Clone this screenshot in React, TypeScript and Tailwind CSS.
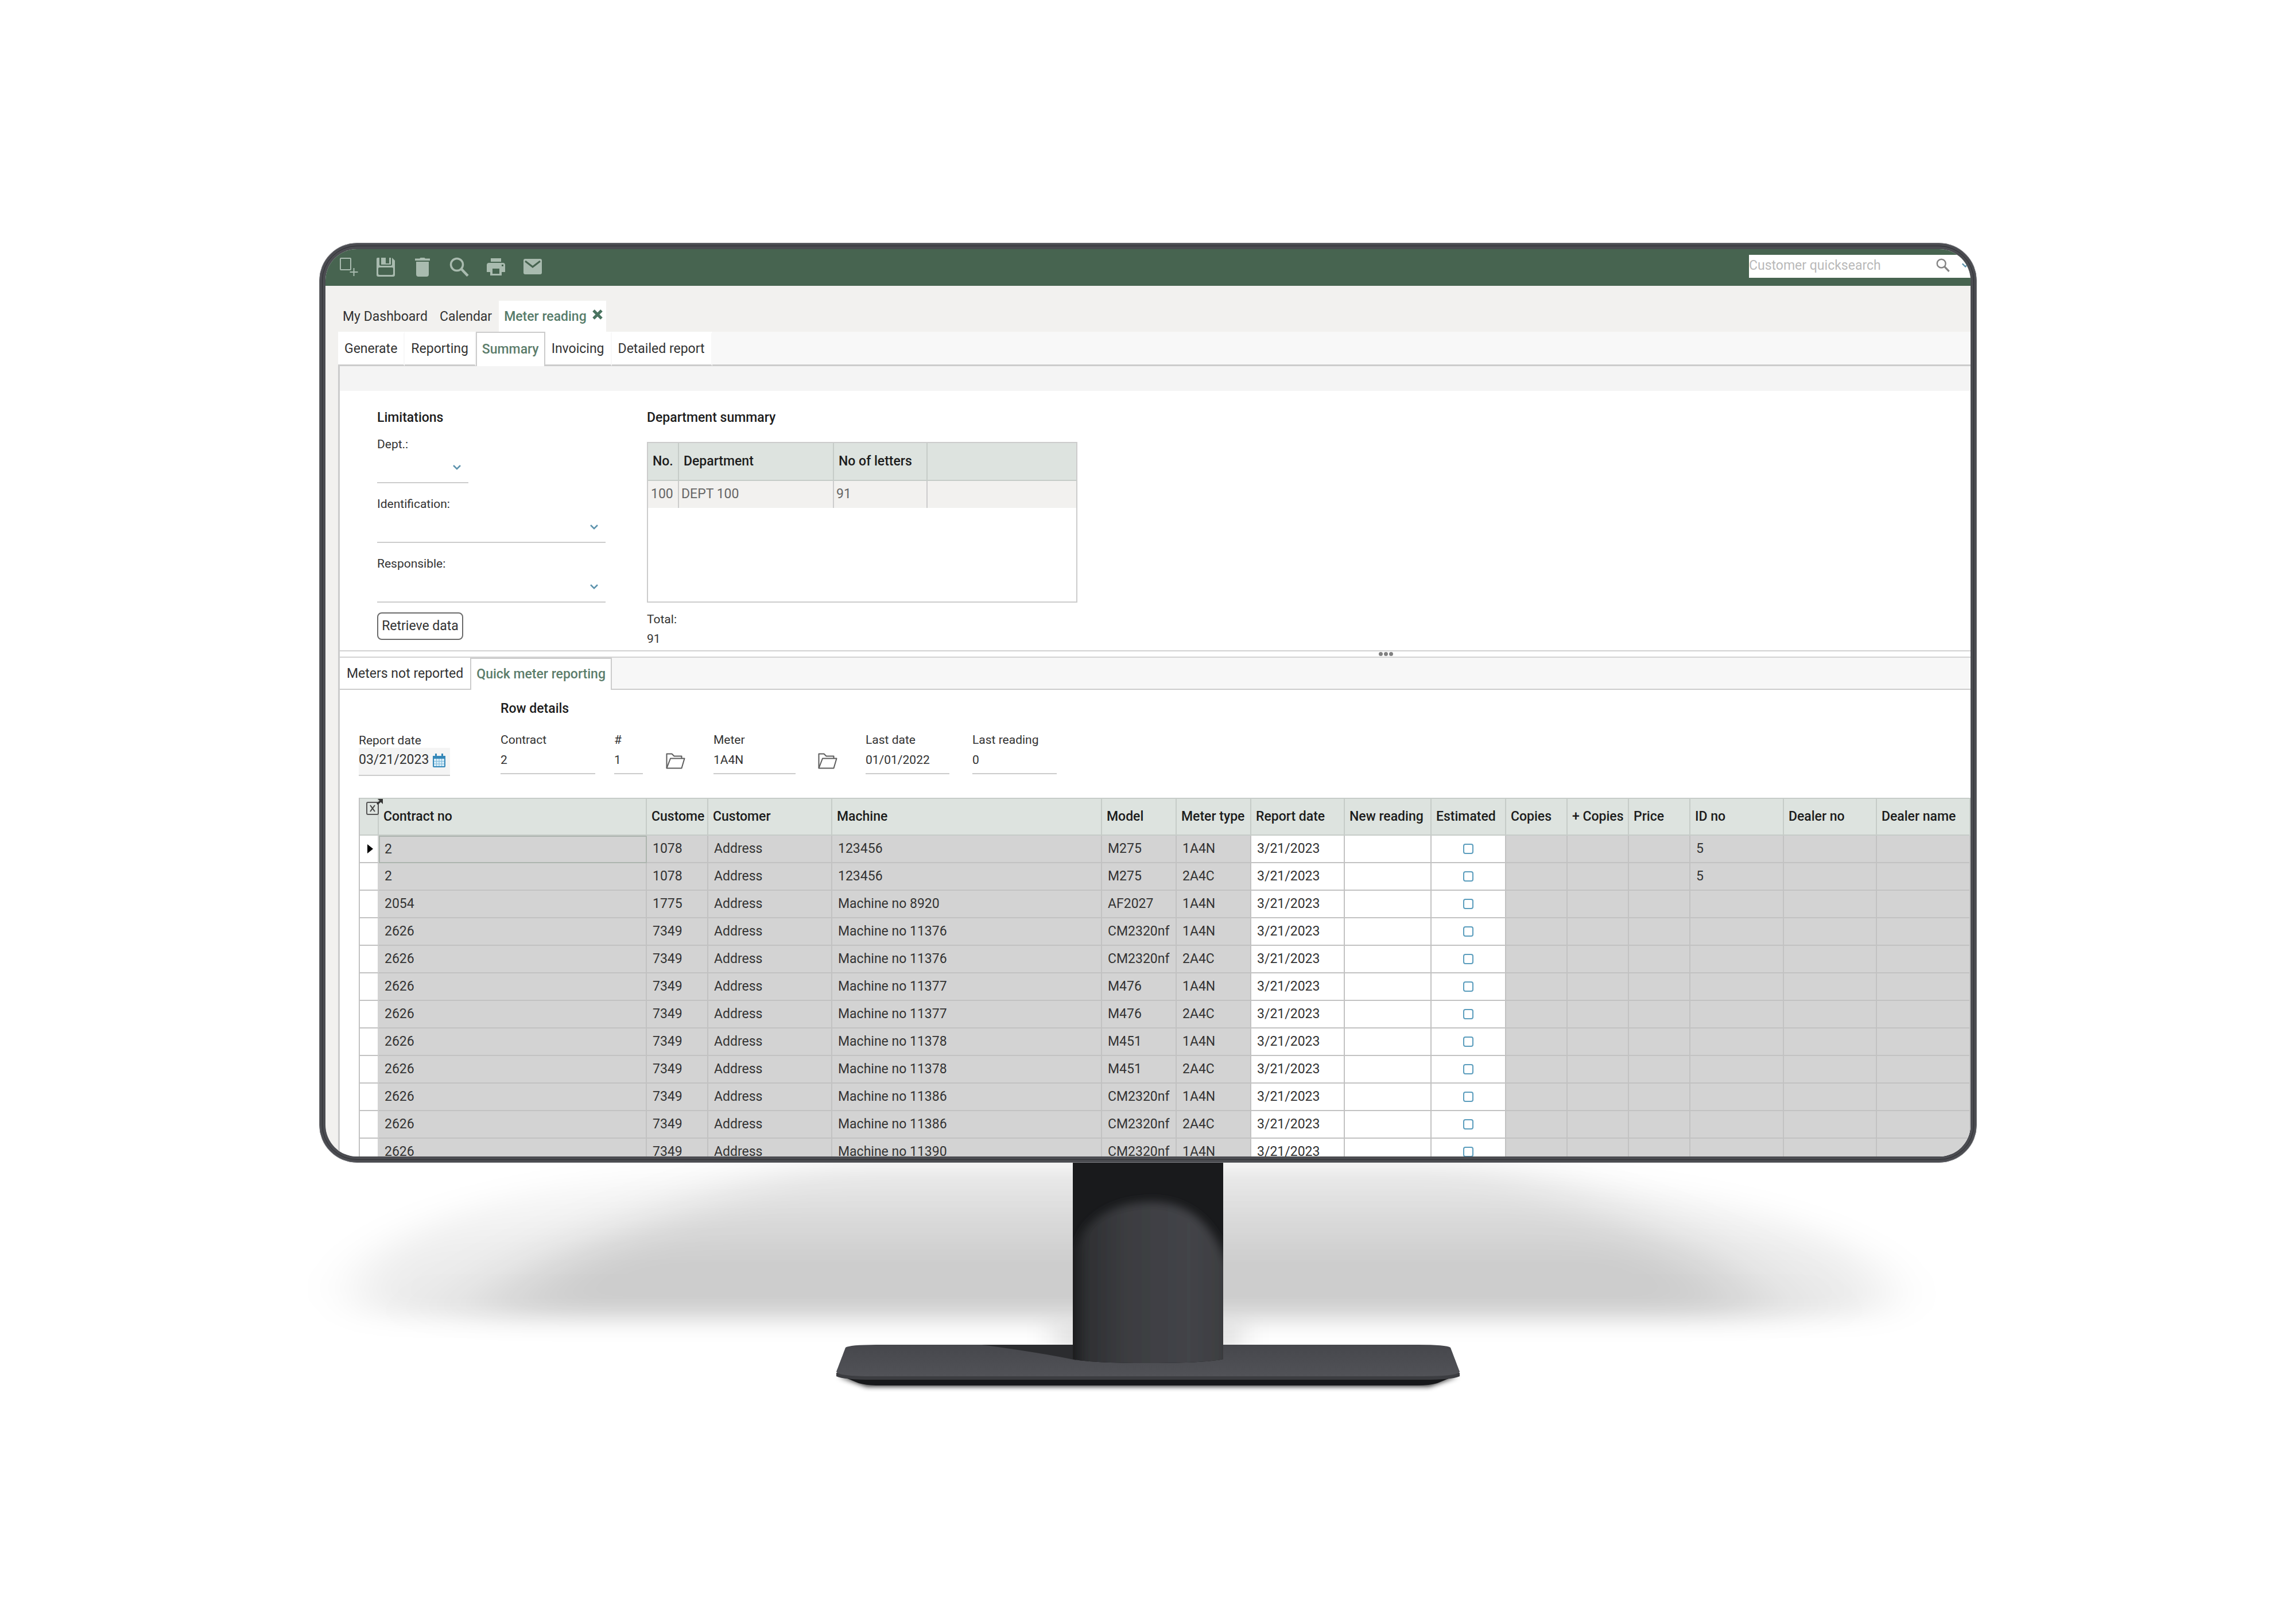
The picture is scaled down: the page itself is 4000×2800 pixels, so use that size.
import type { ReactNode } from 'react';

interface MeterRow {
  contract: string;
  customerNo: string;
  machine: string;
  model: string;
  meterType: string;
  idNo?: string;
}

const REPORT_DATE = '3/21/2023';

const ROWS: MeterRow[] = [
  { contract: '2', customerNo: '1078', machine: '123456', model: 'M275', meterType: '1A4N', idNo: '5' },
  { contract: '2', customerNo: '1078', machine: '123456', model: 'M275', meterType: '2A4C', idNo: '5' },
  { contract: '2054', customerNo: '1775', machine: 'Machine no 8920', model: 'AF2027', meterType: '1A4N' },
  { contract: '2626', customerNo: '7349', machine: 'Machine no 11376', model: 'CM2320nf', meterType: '1A4N' },
  { contract: '2626', customerNo: '7349', machine: 'Machine no 11376', model: 'CM2320nf', meterType: '2A4C' },
  { contract: '2626', customerNo: '7349', machine: 'Machine no 11377', model: 'M476', meterType: '1A4N' },
  { contract: '2626', customerNo: '7349', machine: 'Machine no 11377', model: 'M476', meterType: '2A4C' },
  { contract: '2626', customerNo: '7349', machine: 'Machine no 11378', model: 'M451', meterType: '1A4N' },
  { contract: '2626', customerNo: '7349', machine: 'Machine no 11378', model: 'M451', meterType: '2A4C' },
  { contract: '2626', customerNo: '7349', machine: 'Machine no 11386', model: 'CM2320nf', meterType: '1A4N' },
  { contract: '2626', customerNo: '7349', machine: 'Machine no 11386', model: 'CM2320nf', meterType: '2A4C' },
  { contract: '2626', customerNo: '7349', machine: 'Machine no 11390', model: 'CM2320nf', meterType: '1A4N' },
];

const COLUMNS = [
  { label: 'Contract no', width: 'w-[467px]' },
  { label: 'Custome', width: 'w-[107px]' },
  { label: 'Customer', width: 'w-[216px]' },
  { label: 'Machine', width: 'w-[470px]' },
  { label: 'Model', width: 'w-[130px]' },
  { label: 'Meter type', width: 'w-[130px]' },
  { label: 'Report date', width: 'w-[163px]' },
  { label: 'New reading', width: 'w-[151px]' },
  { label: 'Estimated', width: 'w-[130px]' },
  { label: 'Copies', width: 'w-[107px]' },
  { label: '+ Copies', width: 'w-[107px]' },
  { label: 'Price', width: 'w-[107px]' },
  { label: 'ID no', width: 'w-[163px]' },
  { label: 'Dealer no', width: 'w-[162px]' },
  { label: 'Dealer name', width: '' },
];

/* Icons */

function NewIcon() {
  return (
    <svg className="size-[34px]" viewBox="0 0 34 34" fill="none" stroke="currentColor" strokeWidth="2">
      <rect x="2" y="2" width="18" height="20" rx="1" />
      <path d="M25.500 19v14M18.500 26h14" />
    </svg>
  );
}

function SaveIcon() {
  return (
    <svg className="size-[34px]" viewBox="0 0 34 34" fill="currentColor">
      <path
        fillRule="evenodd"
        d="M3 1h3v12a2 2 0 0 0 2 2h18a2 2 0 0 0 2-2V1l5 5v25a3 3 0 0 1-3 3H4a3 3 0 0 1-3-3V3a2 2 0 0 1 2-2zM6 18a2 2 0 0 0-2 2v9a2 2 0 0 0 2 2h22a2 2 0 0 0 2-2v-9a2 2 0 0 0-2-2z"
      />
      <path d="M9 1h8v10H9zM23 1h3v12H9v-2h14z" />
    </svg>
  );
}

function TrashIcon() {
  return (
    <svg className="size-[34px]" viewBox="0 0 34 34" fill="currentColor">
      <path d="M4 2.500h8l1.500-1.500h7L22 2.500h8V6H4zM6 8h22v22a4 4 0 0 1-4 4H10a4 4 0 0 1-4-4z" />
    </svg>
  );
}

function SearchIcon({ className }: { className: string }) {
  return (
    <svg className={className} viewBox="0 0 34 34" fill="none" stroke="currentColor" strokeWidth="3.500">
      <circle cx="13" cy="13" r="10.500" />
      <path d="M20.500 20.500l11.500 12" strokeWidth="4.500" />
    </svg>
  );
}

function PrintIcon() {
  return (
    <svg className="size-[34px]" viewBox="0 0 34 34" fill="currentColor">
      <path d="M8 2h18v6H8z" />
      <path
        fillRule="evenodd"
        d="M5 10h24a4 4 0 0 1 4 4v12h-6v6H7v-6H1V14a4 4 0 0 1 4-4zM11 20v9h12v-9zM27 13h3v3h-3z"
      />
    </svg>
  );
}

function MailIcon() {
  return (
    <svg className="size-[34px]" viewBox="0 0 34 34">
      <rect x="1" y="3" width="32" height="27" rx="3" fill="currentColor" />
      <path d="M4 7l13 10L30 7" fill="none" stroke="#476450" strokeWidth="3" />
    </svg>
  );
}

function ChevronIcon({ className }: { className: string }) {
  return (
    <svg className={className} viewBox="0 0 16 10" fill="none" stroke="#5d93ad" strokeWidth="2.500">
      <path d="M2 2l6 6 6-6" />
    </svg>
  );
}

function CloseIcon() {
  return (
    <svg className="size-[18px]" viewBox="0 0 18 18" fill="none" stroke="#4a7460" strokeWidth="5">
      <path d="M2 2l14 14M16 2L2 16" />
    </svg>
  );
}

function CalendarIcon() {
  return (
    <svg className="h-[24px] w-[22px]" viewBox="0 0 22 24">
      <path d="M0 4h22v18a2 2 0 0 1-2 2H2a2 2 0 0 1-2-2z" fill="#3487b8" />
      <path d="M4 0h3v6H4zM15 0h3v6h-3z" fill="#3487b8" />
      <path d="M2 9h18v13H2z" fill="#d5ebf7" />
      <path d="M2 13.500h18M2 18h18M6.500 9v13M11 9v13M15.500 9v13" stroke="#7fb9da" strokeWidth="1" />
    </svg>
  );
}

function FolderIcon() {
  return (
    <svg className="h-[28px] w-[34px]" viewBox="0 0 34 28" fill="none" stroke="#5c5c5c" strokeWidth="2" strokeLinejoin="round">
      <path d="M1.500 26.500V1.500h9l4 4h13v4" />
      <path d="M1.500 26.500L8 9.500h24.500l-5 17z" />
    </svg>
  );
}

function ExportIcon() {
  return (
    <svg className="absolute top-0 left-[11px] h-[30px] w-[30px]" viewBox="0 0 30 30" fill="none">
      <rect x="1" y="6" width="20" height="21" rx="2" stroke="#555" strokeWidth="2" />
      <path d="M7 11l8 11M15 11L7 22" stroke="#444" strokeWidth="2" />
      <path d="M19 9l7-6" stroke="#333" strokeWidth="3" />
      <path d="M20 0h9v9z" fill="#333" />
    </svg>
  );
}

const TOOLS = [
  { label: 'New', icon: <NewIcon /> },
  { label: 'Save', icon: <SaveIcon /> },
  { label: 'Delete', icon: <TrashIcon /> },
  { label: 'Search', icon: <SearchIcon className="size-[34px]" /> },
  { label: 'Print', icon: <PrintIcon /> },
  { label: 'Mail', icon: <MailIcon /> },
];

function Toolbar() {
  return (
    <header className="flex h-[64px] items-start justify-between bg-[#476450] pt-[10px] pl-[24px]">
      <div className="flex gap-[30px] pt-[4px] text-[#a9bbaf]">
        {TOOLS.map((tool) => (
          <button key={tool.label} type="button" aria-label={tool.label}>
            {tool.icon}
          </button>
        ))}
      </div>
      <div className="flex h-[40px] w-[386px] items-center bg-white pb-[4px]">
        <input
          type="text"
          aria-label="Customer quicksearch"
          placeholder="Customer quicksearch"
          className="h-full min-w-0 flex-1 outline-none placeholder:text-[#b9b9b9]"
        />
        <SearchIcon className="mr-[20px] size-[24px] text-[#858585]" />
        <ChevronIcon className="mr-[2px] h-[10px] w-[14px]" />
      </div>
    </header>
  );
}

function MainTabs() {
  return (
    <nav className="flex h-[80px] items-end gap-[3px] pl-[21px]">
      <button type="button" className="h-[54px] px-[9px] pt-[2px]">My Dashboard</button>
      <button type="button" className="h-[54px] px-[9px] pt-[2px]">Calendar</button>
      <div className="flex h-[54px] items-center gap-[10px] bg-white pt-[2px] pr-[6px] pl-[9px]">
        <button type="button" className="font-medium text-[#577c6a]">Meter reading</button>
        <button type="button" aria-label="Close tab" className="pb-[8px]">
          <CloseIcon />
        </button>
      </div>
    </nav>
  );
}

function SubTab({ children, active }: { children: ReactNode; active?: boolean }) {
  return (
    <button
      type="button"
      className={
        active
          ? 'border-x-2 border-t-2 border-[#cccccc] bg-white px-[9px] font-medium text-[#5c7d6b]'
          : 'border-t-3 border-r-2 border-b-3 border-t-white border-r-[#f8f8f8] border-b-[#cccccc] bg-white px-[11px]'
      }
    >
      {children}
    </button>
  );
}

function SelectField({ id, label, width }: { id: string; label: string; width: string }) {
  return (
    <div className={width}>
      <label htmlFor={id} className="block text-[21px] leading-[28px]">
        {label}
      </label>
      <div className="relative flex items-center border-b-2 border-[#cccccc]">
        <select id={id} className="h-[52px] w-full appearance-none outline-none" />
        <ChevronIcon className="pointer-events-none absolute right-[12px] h-[10px] w-[16px]" />
      </div>
    </div>
  );
}

function DepartmentTable() {
  return (
    <div className="mt-[28px] h-[280px] w-[750px] border-2 border-[#cccccc]">
      <table className="w-full table-fixed border-separate border-spacing-0 text-left">
        <thead>
          <tr className="h-[66px] bg-[#dde3df] text-[#1c1c1c]">
            <th className="w-[54px] border-r-2 border-b-2 border-[#c6ccc8] pl-[8px] font-medium">No.</th>
            <th className="w-[270px] border-r-2 border-b-2 border-[#c6ccc8] pl-[8px] font-medium">Department</th>
            <th className="w-[163px] border-r-2 border-b-2 border-[#c6ccc8] pl-[8px] font-medium">No of letters</th>
            <th className="border-b-2 border-[#c6ccc8]" />
          </tr>
        </thead>
        <tbody>
          <tr className="h-[47px] bg-[#f2f1ef] text-[#666666]">
            <td className="border-r-2 border-[#cccccc] pl-[5px]">100</td>
            <td className="border-r-2 border-[#cccccc] pl-[4px]">DEPT 100</td>
            <td className="border-r-2 border-[#cccccc] pl-[4px]">91</td>
            <td />
          </tr>
        </tbody>
      </table>
    </div>
  );
}

function SummaryPanel() {
  return (
    <section>
      <div className="h-[43px] bg-[#f4f4f4]" />
      <div className="flex pt-[33px] pb-[6px] pl-[65px]">
        <div className="w-[470px]">
          <h2 className="mb-[18px] leading-[28px] font-medium text-[#1c1c1c]">Limitations</h2>
          <div className="flex flex-col gap-[22px]">
            <SelectField id="dept" label="Dept.:" width="w-[159px]" />
            <SelectField id="identification" label="Identification:" width="w-[398px]" />
            <SelectField id="responsible" label="Responsible:" width="w-[398px]" />
          </div>
          <button type="button" className="mt-[17px] h-[48px] w-[150px] rounded-[8px] border-2 border-[#6b6b6b]">
            Retrieve data
          </button>
        </div>
        <div>
          <h2 className="leading-[28px] font-medium text-[#1c1c1c]">Department summary</h2>
          <DepartmentTable />
          <div className="mt-[15px] flex flex-col gap-[6px] text-[21px] leading-[28px]">
            <span>Total:</span>
            <span>91</span>
          </div>
        </div>
      </div>
    </section>
  );
}

function Splitter() {
  return (
    <div className="flex h-[13px] items-center border-y-2 border-[#d2d2d2] pl-[63.7%]">
      <div className="flex gap-[2px]">
        <span className="size-[7px] rounded-full bg-[#808080]" />
        <span className="size-[7px] rounded-full bg-[#808080]" />
        <span className="size-[7px] rounded-full bg-[#808080]" />
      </div>
    </div>
  );
}

function TextField({ id, label, value, width }: { id: string; label: string; value: string; width: string }) {
  return (
    <div className={width}>
      <label htmlFor={id} className="block leading-[28px] whitespace-nowrap">
        {label}
      </label>
      <input
        id={id}
        type="text"
        defaultValue={value}
        className="h-[46px] w-full border-b-2 border-[#cccccc] pb-[2px] outline-none"
      />
    </div>
  );
}

function RowDetails() {
  return (
    <div className="flex items-end pt-[19px] pl-[33px]">
      <div className="mr-[88px] w-[159px]">
        <label htmlFor="report-date" className="block text-[21px] leading-[26px]">
          Report date
        </label>
        <div className="flex h-[49px] items-center border-b-2 border-[#cccccc] bg-[#f4f4f4] pb-[4px]">
          <input
            id="report-date"
            type="text"
            defaultValue="03/21/2023"
            className="w-[129px] outline-none"
          />
          <button type="button" aria-label="Pick date">
            <CalendarIcon />
          </button>
        </div>
      </div>
      <div className="pb-[3px]">
        <h2 className="mb-[26px] leading-[28px] font-medium text-[#1c1c1c]">Row details</h2>
        <div className="flex items-end text-[21px]">
          <TextField id="contract" label="Contract" value="2" width="mr-[33px] w-[165px]" />
          <TextField id="contract-row" label="#" value="1" width="mr-[40px] w-[50px]" />
          <button type="button" aria-label="Open contract" className="mr-[49px] pb-[9px]">
            <FolderIcon />
          </button>
          <TextField id="meter" label="Meter" value="1A4N" width="mr-[39px] w-[143px]" />
          <button type="button" aria-label="Open meter" className="mr-[49px] pb-[9px]">
            <FolderIcon />
          </button>
          <TextField id="last-date" label="Last date" value="01/01/2022" width="mr-[40px] w-[146px]" />
          <TextField id="last-reading" label="Last reading" value="0" width="w-[147px]" />
        </div>
      </div>
    </div>
  );
}

function Cell({ children, white }: { children?: ReactNode; white?: boolean }) {
  return (
    <td
      className={`border-r-2 border-b-2 border-[#c2c2c2] pl-[10px] whitespace-nowrap ${
        white ? 'bg-white' : 'bg-[#d3d3d3]'
      }`}
    >
      {children}
    </td>
  );
}

function MeterTable() {
  return (
    <div className="mt-[38px] pl-[33px]">
      <table className="w-full table-fixed border-separate border-spacing-0 border-l-2 border-[#c2c2c2] text-left">
        <thead>
          <tr className="h-[66px] bg-[#dde3df] text-[#1c1c1c]">
            <th className="relative w-[33px] border-y-2 border-r-2 border-[#c6ccc8]">
              <ExportIcon />
            </th>
            {COLUMNS.map((col) => (
              <th
                key={col.label}
                className={`border-y-2 border-r-2 border-[#c6ccc8] pl-[8px] font-medium whitespace-nowrap ${col.width}`}
              >
                {col.label}
              </th>
            ))}
          </tr>
        </thead>
        <tbody>
          {ROWS.map((row, i) => (
            <tr key={i} className="h-[48px]">
              <td className="border-r-2 border-b-2 border-r-[#d3d3d3] border-b-[#c2c2c2] bg-white pl-[13px]">
                {i === 0 && (
                  <svg className="h-[16px] w-[10px]" viewBox="0 0 10 16">
                    <path d="M0 0l10 8-10 8z" fill="#000" />
                  </svg>
                )}
              </td>
              {i === 0 ? (
                <td className="border-2 border-[#adb5af] bg-[#d3d3d3] pl-[8px]">{row.contract}</td>
              ) : (
                <Cell>{row.contract}</Cell>
              )}
              <Cell>{row.customerNo}</Cell>
              <Cell>Address</Cell>
              <Cell>{row.machine}</Cell>
              <Cell>{row.model}</Cell>
              <Cell>{row.meterType}</Cell>
              <Cell white>{REPORT_DATE}</Cell>
              <Cell white />
              <td className="border-r-2 border-b-2 border-[#c2c2c2] bg-white">
                <input
                  type="checkbox"
                  aria-label={`Estimated, row ${i + 1}`}
                  className="mx-auto block size-[18px] appearance-none rounded-[4px] border-2 border-[#5b9dbd] bg-white"
                />
              </td>
              <Cell />
              <Cell />
              <Cell />
              <Cell>{row.idNo}</Cell>
              <Cell />
              <Cell />
            </tr>
          ))}
        </tbody>
      </table>
    </div>
  );
}

function ReportingPanel() {
  return (
    <section>
      <nav className="flex h-[56px]">
        <button type="button" className="border-t-2 border-b-2 border-t-white border-b-[#cccccc] bg-white px-[12px]">
          Meters not reported
        </button>
        <button
          type="button"
          className="border-x-2 border-t-2 border-[#cccccc] bg-white px-[9px] font-medium text-[#5c7d6b]"
        >
          Quick meter reporting
        </button>
        <div className="flex-1 border-b-2 border-[#cccccc] bg-[#f7f7f7]" />
      </nav>
      <RowDetails />
      <MeterTable />
    </section>
  );
}

function Stand() {
  return (
    <svg className="block w-full overflow-visible" viewBox="-1444 0 2888 430" aria-hidden="true">
      <defs>
        <filter id="wide" x="-15%" y="-40%" width="130%" height="180%">
          <feGaussianBlur stdDeviation="50 20" />
        </filter>
        <filter id="core" x="-15%" y="-40%" width="130%" height="180%">
          <feGaussianBlur stdDeviation="90 20" />
        </filter>
        <filter id="arch" x="-30%" y="-30%" width="160%" height="160%">
          <feGaussianBlur stdDeviation="8" />
        </filter>
        <filter id="foot" x="-30%" y="-80%" width="160%" height="260%">
          <feGaussianBlur stdDeviation="24 14" />
        </filter>
        <filter id="edge" x="-5%" y="-60%" width="110%" height="220%">
          <feGaussianBlur stdDeviation="4" />
        </filter>
        <linearGradient id="outer" x1="0" y1="0" x2="0" y2="1">
          <stop offset="0" stopColor="#000" stopOpacity="0.02" />
          <stop offset="0.6" stopColor="#000" stopOpacity="0.07" />
          <stop offset="1" stopColor="#000" stopOpacity="0.08" />
        </linearGradient>
        <linearGradient id="inner" x1="0" y1="0" x2="0" y2="1">
          <stop offset="0" stopColor="#000" stopOpacity="0.06" />
          <stop offset="0.7" stopColor="#000" stopOpacity="0.14" />
          <stop offset="1" stopColor="#000" stopOpacity="0.12" />
        </linearGradient>
        <linearGradient id="neck" x1="0" y1="0" x2="1" y2="0">
          <stop offset="0" stopColor="#1f2022" />
          <stop offset="0.08" stopColor="#2f3033" />
          <stop offset="0.35" stopColor="#3c3d41" />
          <stop offset="0.75" stopColor="#434448" />
          <stop offset="1" stopColor="#3c3d40" />
        </linearGradient>
        <linearGradient id="base" x1="0" y1="0" x2="0" y2="1">
          <stop offset="0" stopColor="#46474c" />
          <stop offset="1" stopColor="#515257" />
        </linearGradient>
        <clipPath id="neckClip">
          <path d="M-131 0H131V342Q100 349 0 349T-131 342z" />
        </clipPath>
      </defs>

      {/* wall shadow */}
      <path
        d="M-1340 268Q-1400 230-1360 180Q-1260 60-860 14H700Q1160 70 1270 190Q1300 240 1260 268z"
        fill="url(#outer)"
        filter="url(#wide)"
      />
      <path d="M-1180 272Q-1060 140-600 0H600Q980 120 1090 272z" fill="url(#inner)" filter="url(#core)" />
      <path d="M-165 280H165V330H-165z" fill="#000" fillOpacity="0.1" filter="url(#foot)" />

      {/* base */}
      <path d="M-540 372H540L490 390H-490z" fill="#000" fillOpacity="0.8" filter="url(#edge)" />
      <path d="M-543 368L-504 384Q-490 388-470 388H470Q490 388 504 384L543 368z" fill="#17181a" />
      <path d="M-543 366V372Q-530 378-480 378H480Q530 378 543 372V366z" fill="#3c3d41" />
      <path
        d="M-527 322Q-520 317-470 317H470Q520 317 527 322L543 364Q540 372 480 372H-480Q-540 372-543 364z"
        fill="url(#base)"
      />
      <path d="M-290 317H-125V344Q-180 332-290 317z" fill="#2b2c2f" />

      {/* neck */}
      <g clipPath="url(#neckClip)">
        <path d="M-131 0H131V350H-131z" fill="#191a1c" />
        <path d="M-128 400V150Q-100 72 0 68T140 180V400z" fill="url(#neck)" filter="url(#arch)" />
      </g>
    </svg>
  );
}

export default function App() {
  return (
    <div className="min-h-screen bg-white pt-[423px] font-[Roboto,sans-serif] text-[23px] text-[#333333]">
      <div className="mx-auto w-[72.2%]">
        <div className="relative z-10 flex aspect-[2888/1603] flex-col rounded-[66px] border border-[#77787c] bg-[#4b4c51] p-[4px]">
          <div className="flex min-h-0 flex-1 flex-col rounded-[61px] border border-[#2e2f33] p-[5px]">
            <div className="min-h-0 flex-1 overflow-hidden rounded-[55px] bg-[#f2f1ef]">
              <Toolbar />
              <MainTabs />
              <main className="ml-[22px]">
                <nav className="flex h-[60px] bg-[#f8f8f8]">
                  <SubTab>Generate</SubTab>
                  <SubTab>Reporting</SubTab>
                  <SubTab active>Summary</SubTab>
                  <SubTab>Invoicing</SubTab>
                  <SubTab>Detailed report</SubTab>
                  <div className="flex-1 border-b-3 border-[#cccccc]" />
                </nav>
                <div className="border-l-3 border-[#cccccc] bg-white">
                  <SummaryPanel />
                  <Splitter />
                  <ReportingPanel />
                </div>
              </main>
            </div>
          </div>
        </div>
        <Stand />
      </div>
    </div>
  );
}
